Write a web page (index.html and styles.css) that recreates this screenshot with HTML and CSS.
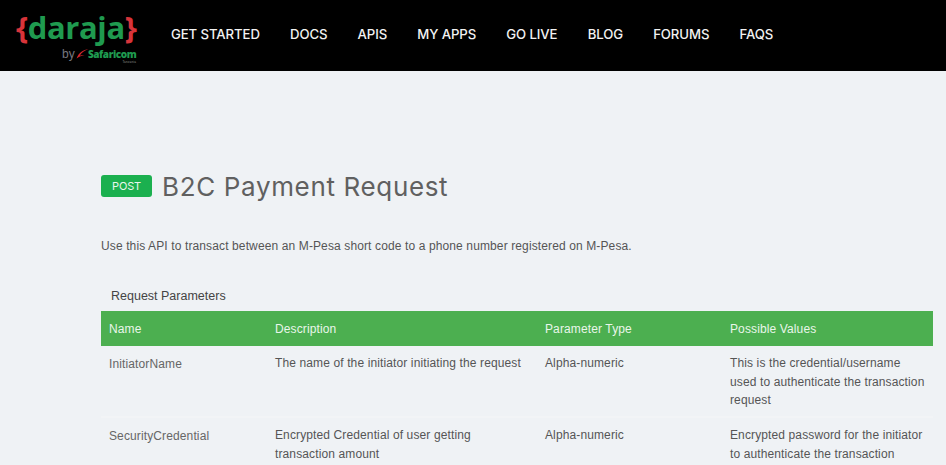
FILE: index.html
```html
<!DOCTYPE html>
<html lang="en">
<head>
<meta charset="utf-8">
<title>B2C Payment Request</title>
<link rel="stylesheet" href="styles.css">
</head>
<body>
<header class="topbar">
  <a class="logo" href="#">
    <span class="logo-main"><span class="brace">{</span>daraja<span class="brace">}</span></span>
    <span class="logo-sub">
      <span class="logo-by">by</span>
      <svg class="logo-swoosh" width="13" height="11" viewBox="0 0 12 10"><path d="M11.500 1C7 1.500 2.500 4 .5 9.500 3 7.500 5 7 8 6.500 5.500 6.500 4.500 6.500 3.500 6.800 5 4 8 2 11.500 1Z" fill="#d8232a"/></svg>
      <span class="logo-saf">Safaricom</span>
    </span>
    <span class="logo-tiny">Tanzania</span>
  </a>
  <nav class="nav">
    <a href="#">GET STARTED</a>
    <a href="#">DOCS</a>
    <a href="#">APIS</a>
    <a href="#">MY APPS</a>
    <a href="#">GO LIVE</a>
    <a href="#">BLOG</a>
    <a href="#">FORUMS</a>
    <a href="#">FAQS</a>
  </nav>
</header>
<main class="content">
  <div class="title-row">
    <span class="badge">POST</span>
    <h1>B2C Payment Request</h1>
  </div>
  <p class="intro">Use this API to transact between an M-Pesa short code to a phone number registered on M-Pesa.</p>
  <h2>Request Parameters</h2>
  <table class="params">
    <thead>
      <tr><th class="c1">Name</th><th class="c2">Description</th><th class="c3">Parameter Type</th><th class="c4">Possible Values</th></tr>
    </thead>
    <tbody>
      <tr>
        <td class="name">InitiatorName</td>
        <td>The name of the initiator initiating the request</td>
        <td>Alpha-numeric</td>
        <td>This is the credential/username used to authenticate the transaction request</td>
      </tr>
      <tr>
        <td class="name">SecurityCredential</td>
        <td>Encrypted Credential of user getting transaction amount</td>
        <td>Alpha-numeric</td>
        <td>Encrypted password for the initiator to authenticate the transaction request</td>
      </tr>
    </tbody>
  </table>
</main>
</body>
</html>
```
FILE: styles.css
```css
* { box-sizing: border-box; }
html, body { margin: 0; height: 465px; overflow: hidden; }
body {
  background: #eff2f5;
  font-family: "Liberation Sans", Arial, sans-serif;
  font-size: 12px;
  line-height: 18px;
  letter-spacing: .12px;
  color: #555;
}
a { color: inherit; text-decoration: none; }

.topbar {
  height: 71px;
  background: #000;
  display: flex;
  align-items: flex-start;
  padding-left: 16px;
}
.logo {
  width: 155px;
  flex: none;
  display: flex;
  flex-direction: column;
  padding-top: 8px;
}
.logo-main {
  font-family: "Open Sans", sans-serif;
  font-weight: 700;
  font-size: 31px;
  line-height: 38px;
  letter-spacing: -.4px;
  color: #1f9a4f;
  white-space: nowrap;
}
.brace { color: #d8343a; }
.logo-sub {
  display: flex;
  align-items: center;
  padding-left: 46px;
  height: 15px;
}
.logo-by { color: #77777f; font-size: 12px; margin-right: 1px; }
.logo-swoosh { margin-right: -1px; }
.logo-saf {
  font-family: "Open Sans", sans-serif;
  font-weight: 800;
  font-size: 10px;
  letter-spacing: -.4px;
  line-height: 12px;
  color: #1f9a4f;
}
.logo-tiny {
  width: 120px;
  text-align: right;
  font-size: 3px;
  line-height: 3px;
  letter-spacing: .2px;
  color: #8a8a8a;
}
.nav {
  display: flex;
  gap: 30.2px;
  height: 68px;
  align-items: center;
  font-family: Inter, sans-serif;
  font-weight: 500;
  font-size: 13.2px;
  letter-spacing: -.1px;
  color: #f2f2f2;
  white-space: nowrap;
}

.content {
  padding: 103px 13px 0 101px;
}
.title-row {
  display: flex;
  align-items: center;
  gap: 10px;
  height: 24px;
}
.badge {
  width: 51px;
  height: 22px;
  background: #1bb04f;
  border-radius: 3px;
  color: #e8f6ec;
  font-family: Inter, sans-serif;
  font-size: 11px;
  letter-spacing: -.2px;
  line-height: 22px;
  text-align: center;
}
h1 {
  margin: 2px 0 0;
  font-family: Inter, sans-serif;
  font-weight: 400;
  font-size: 26px;
  line-height: 32px;
  letter-spacing: .65px;
  color: #606060;
}
.intro {
  margin: 39px 0 0;
}
h2 {
  margin: 32px 0 0 10px;
  font-size: 12.5px;
  font-weight: 400;
  line-height: 18px;
  letter-spacing: 0;
  color: #444;
}
.params {
  margin-top: 6px;
  width: 832px;
  border-collapse: collapse;
  table-layout: fixed;
}
.params th {
  height: 35px;
  padding: 0 8px;
  background: #4caf50;
  color: #e9f6ea;
  font-weight: 400;
  text-align: left;
}
.c1 { width: 166px; }
.c2 { width: 270px; }
.c3 { width: 185px; }
.c4 { width: 211px; }
.params td {
  padding: 8px 8px 6.5px;
  line-height: 18.5px;
  vertical-align: top;
  border-bottom: 2px solid #f2f4f6;
}
.params td.name { padding-top: 9px; color: #666; }
```
